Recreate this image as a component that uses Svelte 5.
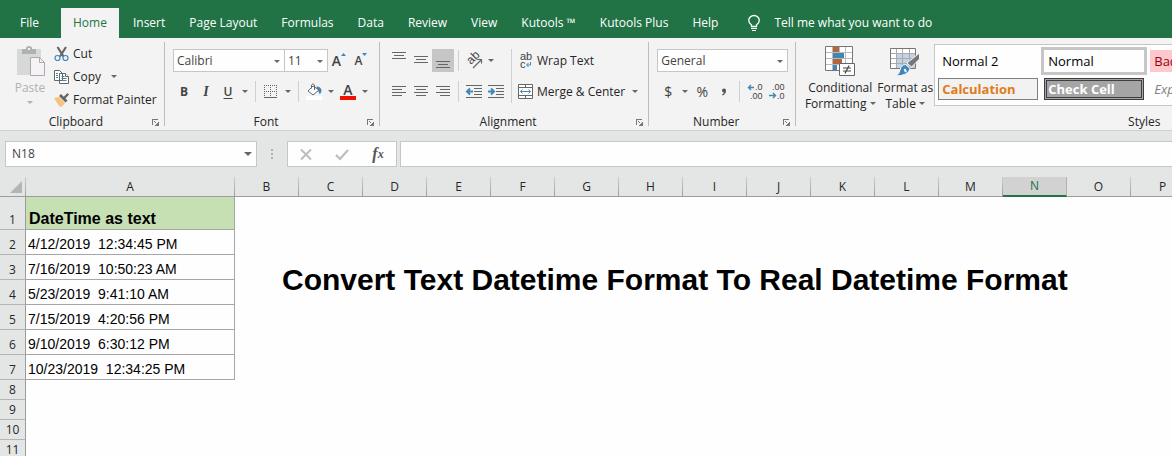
<script lang="ts">
  const tabs = [
    'File',
    'Home',
    'Insert',
    'Page Layout',
    'Formulas',
    'Data',
    'Review',
    'View',
    'Kutools ™',
    'Kutools Plus',
    'Help',
  ];

  const columns = 'ABCDEFGHIJKLMNOP'.split('');

  const rows = [
    { value: 'DateTime as text', kind: 'head' },
    { value: '4/12/2019  12:34:45 PM', kind: 'data' },
    { value: '7/16/2019  10:50:23 AM', kind: 'data' },
    { value: '5/23/2019  9:41:10 AM', kind: 'data' },
    { value: '7/15/2019  4:20:56 PM', kind: 'data' },
    { value: '9/10/2019  6:30:12 PM', kind: 'data' },
    { value: '10/23/2019  12:34:25 PM', kind: 'data' },
    { value: '', kind: 'blank' },
    { value: '', kind: 'blank' },
    { value: '', kind: 'blank' },
    { value: '', kind: 'blank' },
  ];

  // [x, y, width] of each bar inside a 16x21 icon
  const valign = [
    { name: 'Top Align', bars: [[1, 2, 14], [3, 5, 10], [1, 8, 14]] },
    { name: 'Middle Align', bars: [[1, 6, 14], [3, 9, 10], [1, 12, 14]] },
    { name: 'Bottom Align', bars: [[1, 11, 14], [3, 14, 10], [1, 17, 14]] },
  ];

  const halign = [
    { name: 'Align Left', bars: [[1, 5, 14], [1, 8, 10], [1, 11, 14], [1, 14, 10]] },
    { name: 'Center', bars: [[1, 5, 14], [3, 8, 10], [1, 11, 14], [3, 14, 10]] },
    { name: 'Align Right', bars: [[1, 5, 14], [5, 8, 10], [1, 11, 14], [5, 14, 10]] },
  ];

  let activeTab = $state('Home');
  let activeAlign = $state('Bottom Align');
  let activeColumn = $state('N');
  let cellName = $state('N18');
  let formula = $state('');
</script>

{#snippet caret()}
  <svg class="caret" width="6" height="3" viewBox="0 0 6 3" aria-hidden="true">
    <path d="M0 0h6L3 3z" fill="currentColor" />
  </svg>
{/snippet}

{#snippet bars(list: number[][])}
  <svg width="16" height="21" viewBox="0 0 16 21" shape-rendering="crispEdges" aria-hidden="true">
    {#each list as [x, y, w]}
      <rect {x} {y} width={w} height="1" fill="#666" />
    {/each}
  </svg>
{/snippet}

{#snippet footer(label: string)}
  <div class="group-footer">
    <span class="group-label">{label}</span>
    <button class="launcher" aria-label="{label} settings">
      <svg width="7" height="7" viewBox="0 0 7 7" shape-rendering="crispEdges">
        <path d="M.5 6V.5H6" fill="none" stroke="#777" />
        <path d="M7 3v4H3v-1h1V5h1V4h1V3z" fill="#777" />
        <path d="M2 2h1v1h1v1H3V3H2z" fill="#777" />
      </svg>
    </button>
  </div>
{/snippet}

<div class="window">
  <nav class="tabs">
    {#each tabs as tab}
      <button class="tab" class:active={tab === activeTab} onclick={() => (activeTab = tab)}>{tab}</button>
    {/each}
    <button class="tell-me">
      <svg width="12" height="17" viewBox="0 0 12 17" fill="none" stroke="#fff" aria-hidden="true">
        <path d="M3.500 11.500V10C2 8.700 .7 7.500 .7 5.500a5.300 5 0 0 1 10.600 0C11.300 7.500 10 8.700 8.500 10v1.500z" stroke-width="1.300" />
        <path d="M3 13.500h6M4 15.500h4" stroke-width="1.200" />
      </svg>
      Tell me what you want to do
    </button>
  </nav>

  <div class="ribbon">
    <section class="group clipboard">
      <div class="group-body">
        <button class="big-btn paste" disabled>
          <svg width="30" height="31" viewBox="0 0 30 31" aria-hidden="true">
            <path d="M2 3h24v26H2z" fill="#d6d9d7" />
            <path d="M7 3h4V2.500Q11 0 14 0t3 2.500V3h4v5H7z" fill="#b1b1b1" />
            <rect x="13" y="2" width="2" height="2" fill="#f3f3f3" />
            <path d="M15.500 11.500h9l5 5v13h-14z" fill="#f7f2f7" stroke="#aaa" />
            <path d="M24.500 11.500v5h5" fill="none" stroke="#aaa" />
          </svg>
          <span>Paste</span>
          {@render caret()}
        </button>
        <div class="clip-list">
          <button class="text-btn">
            <svg width="16" height="16" viewBox="0 0 16 16" fill="none" aria-hidden="true">
              <path d="M3.500 1l6 9.500M12 1L6 10.500" stroke="#666" stroke-width="2.200" />
              <circle cx="3.500" cy="12" r="2.500" stroke="#3e87b8" stroke-width="1.200" />
              <circle cx="11.500" cy="12" r="2.500" stroke="#3e87b8" stroke-width="1.200" />
            </svg>
            Cut
          </button>
          <button class="text-btn">
            <svg width="16" height="16" viewBox="0 0 16 16" fill="#fff" stroke="#666" aria-hidden="true">
              <path d="M.5 1.500h5l3 3v7h-8zM5.500 4.500h6l3 3v7h-9z" />
              <path d="M11.500 4.500v3h3" />
              <path d="M2 4.500h2M2 6.500h2M2 8.500h2M7.500 7.500h3M7.500 9.500h5M7.500 11.500h5" stroke="#3e87b8" />
            </svg>
            Copy
            {@render caret()}
          </button>
          <button class="text-btn">
            <svg width="16" height="16" viewBox="0 0 16 16" aria-hidden="true">
              <path d="M0 6l5-1 6 6-3.500 4L5 14z" fill="#f8c27c" />
              <path d="M5 4l2-2 6.500 6.500-2 2z" fill="#666" />
              <path d="M9 5.500L13.500 1 15 2.500 11 7z" fill="#666" />
            </svg>
            Format Painter
          </button>
        </div>
      </div>
      {@render footer('Clipboard')}
    </section>

    <section class="group">
      <div class="group-body stack">
        <div class="row">
          <span class="combo font-name">
            <select aria-label="Font"><option>Calibri</option></select>
            {@render caret()}
          </span>
          <span class="combo font-size">
            <select aria-label="Font size"><option>11</option></select>
            {@render caret()}
          </span>
          <button class="icon-btn grow-font" aria-label="Increase font size">
            <span class="big-a">A</span>
            <svg width="5" height="3" viewBox="0 0 5 3"><path d="M0 3h5L2.500 0z" fill="#3e87b8" /></svg>
          </button>
          <button class="icon-btn grow-font" aria-label="Decrease font size">
            <span class="small-a">A</span>
            <svg width="5" height="3" viewBox="0 0 5 3"><path d="M0 0h5L2.500 3z" fill="#3e87b8" /></svg>
          </button>
        </div>
        <div class="row">
          <button class="icon-btn bold">B</button>
          <button class="icon-btn italic">I</button>
          <button class="icon-btn underline">U</button>
          <button class="caret-btn" aria-label="Underline style">{@render caret()}</button>
          <span class="sep"></span>
          <button class="icon-btn" aria-label="Borders">
            <svg width="14" height="13" viewBox="0 0 14 13" fill="none" stroke="#666" shape-rendering="crispEdges" aria-hidden="true">
              <path d="M0 .5h13M0 6.500h13M.5 0v12M6.500 0v12M12.500 0v12" stroke-dasharray="1 1" />
              <path d="M0 12.500h13" />
            </svg>
          </button>
          <button class="caret-btn" aria-label="Border style">{@render caret()}</button>
          <span class="sep"></span>
          <button class="icon-btn" aria-label="Fill color">
            <svg width="16" height="17" viewBox="0 0 16 17" aria-hidden="true">
              <path d="M10.500 3.500q5 0 5 4.500-.5 3-2 3-.5-3-3-5z" fill="#3e87b8" />
              <path d="M7 3L2 8l5 4 6-5z" fill="#fff" stroke="#666" />
              <path d="M5.500 5.500V2q1.500-2.500 3 0v5" fill="none" stroke="#666" />
              <rect y="13" width="16" height="4" fill="#fff" />
            </svg>
          </button>
          <button class="caret-btn" aria-label="Fill colors">{@render caret()}</button>
          <button class="icon-btn font-color" aria-label="Font color">A</button>
          <button class="caret-btn" aria-label="Font colors">{@render caret()}</button>
        </div>
      </div>
      {@render footer('Font')}
    </section>

    <section class="group">
      <div class="group-body">
        <div class="stack">
          <div class="row">
            {#each valign as item}
              <button
                class="icon-btn"
                class:pressed={item.name === activeAlign}
                aria-label={item.name}
                onclick={() => (activeAlign = item.name)}
              >
                {@render bars(item.bars)}
              </button>
            {/each}
            <span class="sep"></span>
            <button class="icon-btn" aria-label="Orientation">
              <svg width="18" height="19" viewBox="0 0 18 19" aria-hidden="true">
                <text class="glyph" x="0" y="0" font-size="12" transform="translate(6 14) rotate(-45)">ab</text>
                <path d="M8 17L16 9M16.500 12.500V8.500H12" fill="none" stroke="#666" stroke-width="1.200" />
              </svg>
            </button>
            <button class="caret-btn" aria-label="Orientation options">{@render caret()}</button>
          </div>
          <div class="row">
            {#each halign as item}
              <button class="icon-btn" aria-label={item.name}>{@render bars(item.bars)}</button>
            {/each}
            <span class="sep"></span>
            <button class="icon-btn" aria-label="Decrease indent">
              <svg width="16" height="13" viewBox="0 0 16 13" fill="none" stroke="#666" aria-hidden="true">
                <path d="M0 .5h16M8 3.500h8M8 6.500h8M8 9.500h8M0 12.500h16" />
                <path d="M7 6.500H2M4 3.500l-3 3 3 3" stroke="#3e87b8" stroke-width="2" />
              </svg>
            </button>
            <button class="icon-btn" aria-label="Increase indent">
              <svg width="16" height="13" viewBox="0 0 16 13" fill="none" stroke="#666" aria-hidden="true">
                <path d="M0 .5h16M8 3.500h8M8 6.500h8M8 9.500h8M0 12.500h16" />
                <path d="M0 6.500h5M3 3.500l3 3-3 3" stroke="#3e87b8" stroke-width="2" />
              </svg>
            </button>
          </div>
        </div>
        <span class="sep tall"></span>
        <div class="stack">
          <button class="text-btn">
            <svg width="16" height="21" viewBox="0 0 16 21" aria-hidden="true">
              <text class="glyph" x="2" y="10" font-size="11">ab</text>
              <text class="glyph" x="2" y="18" font-size="11">c</text>
              <path d="M12.500 12v3H9M10.500 13l-2 2 2 2" fill="none" stroke="#3e87b8" />
            </svg>
            Wrap Text
          </button>
          <button class="text-btn merge">
            <svg width="16" height="15" viewBox="0 0 16 15" fill="#fff" stroke="#666" aria-hidden="true">
              <path d="M.5 .5h14v14H.5zM.5 3.500h14M.5 11.500h14M7.500 .5v3M7.500 11.500v3" />
              <path d="M2.500 7.500h10M4.500 5.500l-2 2 2 2M10.500 5.500l2 2-2 2" fill="none" stroke="#3e87b8" />
            </svg>
            Merge &amp; Center
            {@render caret()}
          </button>
        </div>
      </div>
      {@render footer('Alignment')}
    </section>

    <section class="group">
      <div class="group-body stack">
        <div class="row">
          <span class="combo number-format">
            <select aria-label="Number format"><option>General</option></select>
            {@render caret()}
          </span>
        </div>
        <div class="row">
          <button class="icon-btn symbol">$</button>
          <button class="caret-btn" aria-label="Currency options">{@render caret()}</button>
          <button class="icon-btn symbol">%</button>
          <button class="icon-btn" aria-label="Comma style">
            <svg width="6" height="8" viewBox="0 0 6 8" aria-hidden="true">
              <path d="M1 2.500a2 2 0 0 1 4 0Q5 6 1.500 7.500l-.5-1Q3 5.500 3 4.500 1 4.500 1 2.500z" fill="#555" />
            </svg>
          </button>
          <span class="sep"></span>
          <button class="icon-btn" aria-label="Increase decimal">
            <svg width="16" height="19" viewBox="0 0 16 19" aria-hidden="true">
              <text class="glyph" x="8" y="8" font-size="9">.0</text>
              <text class="glyph" x="3" y="17" font-size="9">.00</text>
              <path d="M7 5.500H2M4 3L1.500 5.500 4 8" fill="none" stroke="#3e87b8" stroke-width="1.400" />
            </svg>
          </button>
          <button class="icon-btn" aria-label="Decrease decimal">
            <svg width="16" height="19" viewBox="0 0 16 19" aria-hidden="true">
              <text class="glyph" x="3" y="8" font-size="9">.00</text>
              <text class="glyph" x="8" y="17" font-size="9">.0</text>
              <path d="M0 13.500h6M4 11l2.500 2.500L4 16" fill="none" stroke="#3e87b8" stroke-width="1.400" />
            </svg>
          </button>
        </div>
      </div>
      {@render footer('Number')}
    </section>

    <section class="group styles">
      <div class="group-body">
        <button class="big-btn conditional">
          <svg width="30" height="31" viewBox="0 0 30 31" aria-hidden="true">
            <path d="M.5 .5h27v24H.5z" fill="#fff" stroke="#777" />
            <path d="M1 6.500h26M1 12.500h26M1 18.500h26M7.500 1v23M14.500 1v23M20.500 1v23" stroke="#bbb" />
            <path d="M8 1h6v5H8zM8 13h9v5H8z" fill="#b5653a" />
            <path d="M8 7h11v5H8zM8 19h4v5H8z" fill="#3e87b8" />
            <path d="M14.500 17.500h15v12h-15z" fill="#fff" stroke="#666" />
            <path d="M18 22h8M18 25h8M24 19.500l-4 8" stroke="#444" stroke-width="1.200" />
          </svg>
          <span>Conditional</span>
          <span>Formatting {@render caret()}</span>
        </button>
        <button class="big-btn format-table">
          <svg width="30" height="31" viewBox="0 0 30 31" aria-hidden="true">
            <path d="M.5 2.500h25v20H.5z" fill="#fff" stroke="#777" />
            <path d="M7 8h18v14H7z" fill="#c3d3e6" />
            <path d="M1 7.500h24M1 12.500h24M1 17.500h24M6.500 3v19M12.500 3v19M19.500 3v19" stroke="#aaa" />
            <path d="M29.500 7v6l-8 8-4.500-4z" fill="#777" stroke="#f3f3f3" />
            <path d="M15.500 18.500l4.500 4q-1 7-14.500 7.500 4-2 4.500-6 1-5 5.500-5.500z" fill="#3e87b8" stroke="#f3f3f3" />
            <path d="M14.500 23l1.500 3" stroke="#fff" stroke-width="2" />
          </svg>
          <span>Format as</span>
          <span>Table {@render caret()}</span>
        </button>
        <div class="gallery">
          <button class="style-item">Normal 2</button>
          <button class="style-item selected">Normal</button>
          <button class="style-item bad">Bad</button>
          <button class="style-item calculation">Calculation</button>
          <button class="style-item check-cell">Check Cell</button>
          <button class="style-item explanatory">Explanatory…</button>
        </div>
      </div>
      <div class="group-footer"><span class="group-label">Styles</span></div>
    </section>
  </div>

  <div class="formula-bar">
    <span class="combo name-box">
      <input aria-label="Name box" bind:value={cellName} />
      <svg class="caret" width="8" height="4" viewBox="0 0 8 4" aria-hidden="true">
        <path d="M0 0h8L4 4z" fill="currentColor" />
      </svg>
    </span>
    <svg class="grip" width="2" height="10" viewBox="0 0 2 10" aria-hidden="true">
      <path d="M0 0h2v2H0zM0 4h2v2H0zM0 8h2v2H0z" fill="#b0b0b0" />
    </svg>
    <div class="formula-actions">
      <button aria-label="Cancel">
        <svg width="12" height="11" viewBox="0 0 12 11"><path d="M1 .5l10 10M11 .5L1 10.500" stroke="#bdbdbd" stroke-width="2" /></svg>
      </button>
      <button aria-label="Enter">
        <svg width="14" height="11" viewBox="0 0 14 11"><path d="M1 6l4 4L13 1" fill="none" stroke="#bdbdbd" stroke-width="2.200" /></svg>
      </button>
      <button class="fx" aria-label="Insert function">f<sub>x</sub></button>
    </div>
    <input class="formula-input" aria-label="Formula" bind:value={formula} />
  </div>

  <main class="sheet">
    <table>
      <colgroup>
        <col class="col-index" />
        {#each columns as column}
          <col class={column === 'A' ? 'col-wide' : 'col-normal'} />
        {/each}
      </colgroup>
      <thead>
        <tr>
          <th class="corner" aria-label="Select all">
            <svg width="12" height="12" viewBox="0 0 12 12"><path d="M12 0v12H0z" fill="#b4b4b4" /></svg>
          </th>
          {#each columns as column}
            <th
              class="col-head"
              class:current={column === activeColumn}
              scope="col"
              onclick={() => (activeColumn = column)}>{column}</th
            >
          {/each}
        </tr>
      </thead>
      <tbody>
        {#each rows as row, i}
          <tr class={row.kind}>
            <th class="row-head" scope="row">{i + 1}</th>
            <td class="value">{row.value}</td>
            <td colspan={columns.length - 1}></td>
          </tr>
        {/each}
      </tbody>
    </table>
    <h1 class="caption">Convert Text Datetime Format To Real Datetime Format</h1>
  </main>
</div>

<style>
  :global(body) {
    margin: 0;
    overflow: hidden;
  }

  .window {
    display: flex;
    flex-direction: column;
    height: 100vh;
    background: #fefefe;
    color: #262626;
    font: 12px/16px 'Open Sans', 'Noto Sans', sans-serif;
  }

  button,
  input,
  select {
    margin: 0;
    padding: 0;
    border: 0;
    border-radius: 0;
    background: none;
    color: inherit;
    font: inherit;
    outline: none;
  }

  svg {
    flex: none;
    overflow: visible;
  }

  .caret {
    color: #666;
  }

  /* tab strip */
  .tabs {
    display: flex;
    flex: none;
    align-items: stretch;
    height: 30px;
    padding: 8px 0 0 6px;
    background: #217346;
  }

  .tab {
    padding: 0 12px;
    color: #fff;
    white-space: nowrap;
  }

  .tab:first-child {
    padding: 0 22px 0 14px;
  }

  .tab.active {
    margin-right: 2px;
    background: #f3f3f3;
    color: #217346;
  }

  .tell-me {
    display: flex;
    align-items: center;
    gap: 14px;
    padding: 0 18px;
    color: #fff;
    white-space: nowrap;
  }

  /* ribbon */
  .ribbon {
    display: flex;
    flex: none;
    padding: 4px 0;
    overflow: hidden;
    background: #f3f3f3;
    border-bottom: 1px solid #d0d0d0;
  }

  .group {
    display: flex;
    flex: none;
    flex-direction: column;
    justify-content: space-between;
    height: 84px;
    border-right: 1px solid #bdbdbd;
  }

  .group-body {
    display: flex;
    padding: 7px 7px 0 8px;
  }

  .stack {
    display: flex;
    flex-direction: column;
    gap: 8px;
  }

  .row {
    display: flex;
    align-items: center;
    height: 23px;
  }

  .group-footer {
    display: flex;
    align-items: center;
    height: 8px;
    line-height: 8px;
  }

  .group-label {
    flex: 1;
    text-align: center;
  }

  .launcher {
    display: flex;
    width: 12px;
    padding-right: 4px;
  }

  .icon-btn {
    display: flex;
    align-items: center;
    justify-content: center;
    width: 22px;
    height: 23px;
    color: #444;
  }

  .icon-btn.pressed {
    background: #c6c6c6;
  }

  .caret-btn {
    display: flex;
    align-items: center;
    justify-content: center;
    width: 12px;
    height: 23px;
  }

  .sep {
    width: 1px;
    height: 21px;
    margin: 0 4px;
    background: #cfcfcf;
  }

  .sep.tall {
    height: 54px;
    margin-right: 6px;
  }

  .text-btn {
    display: flex;
    align-items: center;
    gap: 3px;
    height: 23px;
    white-space: nowrap;
  }

  .text-btn .caret {
    margin-left: 7px;
  }

  .merge .caret {
    margin: 0 3px 0 4px;
  }

  .big-btn {
    display: flex;
    flex-direction: column;
    align-items: center;
    white-space: nowrap;
  }

  .big-btn svg:first-child {
    margin-bottom: 3px;
  }

  .big-btn .caret {
    margin-bottom: 2px;
  }

  .glyph {
    fill: #444;
    font-family: 'Liberation Sans', Arial, sans-serif;
  }

  /* clipboard */
  .clipboard {
    width: 164px;
  }

  .clipboard .group-body {
    gap: 9px;
    padding: 0 0 0 15px;
  }

  .paste {
    width: 30px;
    padding-top: 4px;
    color: #b1b1b1;
  }

  .paste .caret {
    margin-top: 5px;
    color: #b1b1b1;
  }

  .clip-list {
    display: flex;
    flex-direction: column;
  }

  /* drop-downs */
  .combo {
    display: flex;
    position: relative;
    box-sizing: border-box;
    height: 23px;
    border: 1px solid #c6c6c6;
    background: #fefefe;
    color: #444;
  }

  .combo select,
  .combo input {
    width: 100%;
    padding: 0 12px 0 3px;
    appearance: none;
  }

  .combo .caret {
    position: absolute;
    top: 10px;
    right: 4px;
    pointer-events: none;
  }

  .font-name {
    width: 112px;
  }

  .font-size {
    width: 43px;
    border-left: 0;
  }

  .number-format {
    width: 131px;
  }

  /* font */
  .grow-font {
    align-items: flex-start;
    font-weight: 600;
  }

  .grow-font svg {
    margin-top: 4px;
  }

  .big-a {
    font-size: 14px;
    line-height: 24px;
  }

  .small-a {
    font-size: 12px;
    line-height: 24px;
  }

  .bold {
    font-weight: 700;
  }

  .italic {
    font-family: 'Liberation Serif', serif;
    font-size: 14px;
    font-style: italic;
    font-weight: 700;
  }

  .underline {
    font-weight: 600;
    text-decoration: underline;
    text-underline-offset: 2px;
  }

  .font-color {
    box-sizing: border-box;
    width: 16px;
    height: 17px;
    margin: 0 3px;
    border-bottom: 4px solid #e10;
    font-size: 14px;
    font-weight: 600;
    line-height: 14px;
  }

  .symbol {
    font-size: 14px;
  }

  /* styles */
  .styles {
    width: 696px;
  }

  .styles .group-body {
    align-items: flex-start;
    padding: 2px 0 0 8px;
  }

  .styles .big-btn {
    padding-top: 2px;
  }

  .conditional {
    width: 72px;
  }

  .format-table {
    width: 58px;
  }

  .gallery {
    display: grid;
    flex: 1;
    grid-template-columns: repeat(3, 100px);
    grid-template-rows: repeat(2, 22px);
    gap: 6px;
    padding: 5px 3px;
    border: 1px solid #c6c6c6;
    background: #fefefe;
  }

  .style-item {
    padding: 0 4px;
    overflow: hidden;
    color: #000;
    font-size: 13px;
    text-align: left;
    white-space: nowrap;
  }

  .selected {
    outline: 3px solid #c6c6c6;
  }

  .bad {
    background: #ffc7ce;
    color: #9c0006;
  }

  .calculation {
    padding: 0 3px;
    border: 1px solid #7f7f7f;
    background: #f2f2f2;
    color: #e07b1c;
    font-weight: 700;
  }

  .check-cell {
    padding: 0 1px;
    border: 3px double #3f3f3f;
    background: #a5a5a5;
    color: #fff;
    font-weight: 700;
    line-height: 14px;
  }

  .explanatory {
    color: #7f7f7f;
    font-style: italic;
  }

  /* formula bar */
  .formula-bar {
    display: flex;
    flex: none;
    align-items: center;
    height: 26px;
    padding: 10px 0 10px 5px;
    background: #e4e6e5;
  }

  .name-box {
    width: 252px;
    height: 26px;
  }

  .name-box input {
    padding-left: 6px;
  }

  .grip {
    margin: 0 14px;
  }

  .formula-actions {
    display: flex;
    box-sizing: border-box;
    width: 110px;
    height: 26px;
    border: 1px solid #c6c6c6;
    background: #fefefe;
  }

  .formula-actions button {
    display: flex;
    flex: 1;
    align-items: center;
    justify-content: center;
  }

  .formula-actions .fx {
    color: #555;
    font: italic 700 16px/16px 'Liberation Serif', serif;
  }

  .fx sub {
    font-size: 12px;
    line-height: 8px;
  }

  .formula-input {
    flex: 1;
    box-sizing: border-box;
    height: 26px;
    margin-left: 3px;
    padding: 0 6px;
    border: 1px solid #c6c6c6;
    border-right: 0;
    background: #fefefe;
  }

  /* sheet */
  .sheet {
    position: relative;
    flex: 1;
    overflow: hidden;
  }

  table {
    width: 0;
    border-spacing: 0;
    table-layout: fixed;
  }

  .col-index {
    width: 26px;
  }

  .col-wide {
    width: 209px;
  }

  .col-normal {
    width: 64px;
  }

  th,
  td {
    box-sizing: border-box;
    padding: 0;
  }

  th {
    background: #e4e6e5;
    font-weight: 400;
  }

  .corner,
  .col-head {
    height: 20px;
    border-bottom: 1px solid #9b9b9b;
    border-right: 1px solid;
    border-image: linear-gradient(#d0d0d0, #9b9b9b) 1;
    line-height: 18px;
  }

  .corner {
    padding-right: 3px;
    text-align: right;
    vertical-align: bottom;
  }

  .corner svg {
    display: block;
    margin: 0 0 3px auto;
  }

  .col-head.current {
    border-bottom: 2px solid #217346;
    border-image: none;
    border-right-color: #b0b0b0;
    background: #d2d2d2;
    color: #217346;
  }

  .row-head {
    border-right: 1px solid #9b9b9b;
    border-bottom: 1px solid #b4b4b4;
    line-height: 18px;
    vertical-align: bottom;
  }

  .head {
    height: 33px;
  }

  .data {
    height: 25px;
  }

  .blank {
    height: 20px;
  }

  .value {
    padding-left: 2px;
    color: #000;
    font: 14px/20px 'Liberation Sans', Arial, sans-serif;
    vertical-align: bottom;
    white-space: pre;
  }

  .head .value,
  .data .value {
    border-right: 1px solid #a6a6a6;
    border-bottom: 1px solid #a6a6a6;
  }

  .head .value {
    padding-left: 3px;
    background: #c6dfb3;
    font-size: 16px;
    font-weight: 700;
  }

  /* text box floating over the cells */
  .caption {
    position: absolute;
    top: 85px;
    left: 282px;
    margin: 0;
    color: #000;
    font: 700 30px/36px 'Liberation Sans', Arial, sans-serif;
    white-space: nowrap;
  }
</style>
